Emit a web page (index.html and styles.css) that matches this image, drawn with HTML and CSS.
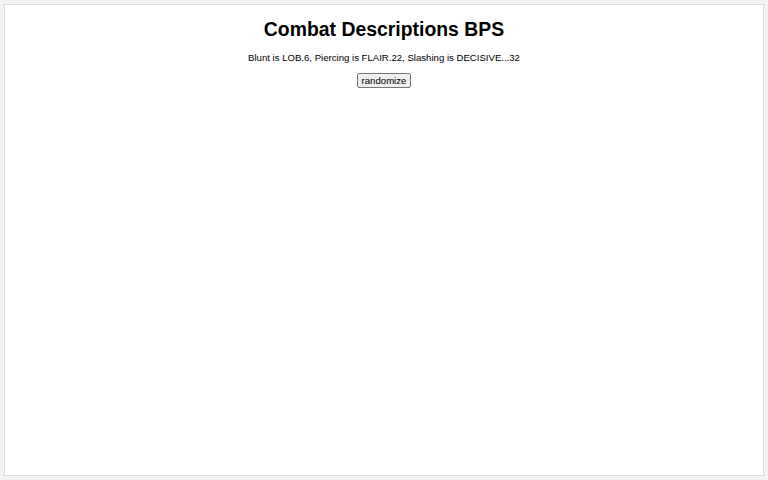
FILE: index.html
```html
<html><head>
	<meta charset="utf-8">
	<title>Combat Descriptions BPS</title>
	<link rel="stylesheet" href="styles.css">
</head>
<body>
	<div class="page">
		<h1 class="title">Combat Descriptions BPS</h1>
		<p class="result" id="result">Blunt is LOB.6, Piercing is FLAIR.22, Slashing is DECISIVE...32</p>
		<button class="btn" id="randomize">randomize</button>
	</div>
</body></html>
```
FILE: styles.css
```css
* {
	margin: 0;
	padding: 0;
}

html, body {
	height: 100%;
}

body {
	font-family: "Liberation Sans", Arial, sans-serif;
	color: #000;
	background: #f3f3f3;
	padding: 4px;
	box-sizing: border-box;
}

.page {
	height: 100%;
	box-sizing: border-box;
	background: #fff;
	border: 1px solid #dcdcdc;
	text-align: center;
	padding-top: 13px;
}

.title {
	font-size: 19.4px;
	font-weight: bold;
	line-height: 22px;
}

.result {
	font-size: 9.6px;
	line-height: 12px;
	margin-top: 12px;
}

.btn {
	font-family: "Liberation Sans", Arial, sans-serif;
	font-size: 9.6px;
	margin-top: 9px;
	padding: 1px 4px;
	background: #efefef;
	border: 1px solid #767676;
	border-radius: 2px;
}
```
